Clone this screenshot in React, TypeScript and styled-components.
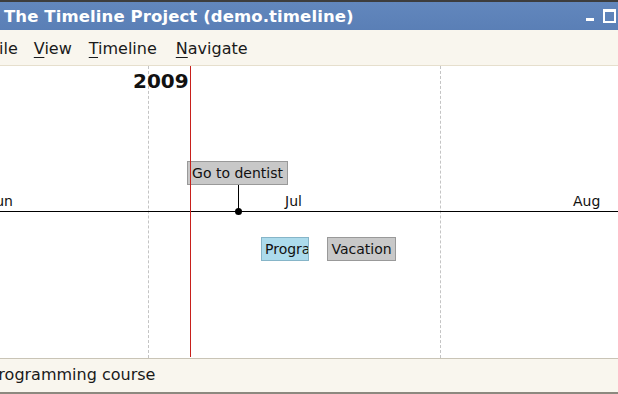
import React from "react";
import styled, { createGlobalStyle } from "styled-components";

const Global = createGlobalStyle`
  html, body { margin: 0; padding: 0; background: #ffffff; overflow: hidden; }
  body { font-family: "DejaVu Sans", Verdana, sans-serif; }
`;

const Window = styled.div`
  width: 618px;
  height: 394px;
  display: flex;
  flex-direction: column;
  overflow: hidden;
  background: #ffffff;
`;

const TitleBar = styled.div`
  height: 28px;
  border-top: 2px solid #3d3d3d;
  background: linear-gradient(#6287bd, #5a7fb6);
  display: flex;
  align-items: center;
  justify-content: space-between;
  padding: 0 2px 0 4px;
  flex-shrink: 0;
`;

const Title = styled.div`
  color: #ffffff;
  font-weight: bold;
  font-size: 16.5px;
  letter-spacing: 0.1px;
  white-space: nowrap;
`;

const WinButtons = styled.div`
  display: flex;
  align-items: center;
  gap: 9px;
`;

const MinBtn = styled.div`
  width: 8px;
  height: 3px;
  background: #ffffff;
  margin-top: 6px;
`;

const MaxBtn = styled.div`
  width: 9px;
  height: 9px;
  border: 2px solid #ffffff;
  border-top-width: 3px;
`;

const MenuBar = styled.div`
  height: 36px;
  background: #f9f6ee;
  border-bottom: 1px solid #e6dfcd;
  display: flex;
  align-items: center;
  gap: 17px;
  padding-top: 1px;
  box-sizing: border-box;
  flex-shrink: 0;
`;

const MenuItem = styled.div<{ $shift?: number }>`
  font-size: 16px;
  color: #1a1a1a;
  white-space: nowrap;
  margin-left: ${(p) => p.$shift ?? 0}px;
  u { text-underline-offset: 3px; }
`;

const Canvas = styled.div`
  position: relative;
  flex: 1;
  background: #ffffff;
  overflow: hidden;
`;

const DottedLine = styled.div<{ $x: number }>`
  position: absolute;
  top: 0;
  bottom: 0;
  left: ${(p) => p.$x}px;
  width: 0;
  border-left: 1px dashed #c4c4c4;
`;

const NowLine = styled.div<{ $x: number }>`
  position: absolute;
  top: 0;
  bottom: 1px;
  left: ${(p) => p.$x}px;
  width: 1px;
  background: #c8201c;
`;

const Year = styled.div`
  position: absolute;
  left: 133px;
  top: 3px;
  font-size: 20px;
  font-weight: bold;
  color: #111;
`;

const Axis = styled.div`
  position: absolute;
  left: 0;
  right: 0;
  top: 145px;
  height: 1px;
  background: #000;
`;

const AxisLabel = styled.div<{ $x: number }>`
  position: absolute;
  left: ${(p) => p.$x}px;
  top: 127px;
  font-size: 14px;
  color: #111;
`;

const EventBox = styled.div<{ $x: number; $y: number; $w: number; $blue?: boolean }>`
  position: absolute;
  left: ${(p) => p.$x}px;
  top: ${(p) => p.$y}px;
  width: ${(p) => p.$w}px;
  height: 24px;
  box-sizing: border-box;
  background: ${(p) => (p.$blue ? "#acdbec" : "#c8c8c8")};
  border: 1px solid ${(p) => (p.$blue ? "#86b5c8" : "#999999")};
  font-size: 14px;
  color: #111;
  line-height: 22px;
  padding: 0 ${(p) => (p.$blue ? 3 : 1)}px;
  text-align: ${(p) => (p.$blue ? "left" : "center")};
  white-space: nowrap;
  overflow: hidden;
`;

const Stem = styled.div<{ $x: number }>`
  position: absolute;
  left: ${(p) => p.$x}px;
  top: 119px;
  width: 1px;
  height: 26px;
  background: #000;
`;

const Dot = styled.div<{ $x: number }>`
  position: absolute;
  left: ${(p) => p.$x - 3}px;
  top: 142px;
  width: 7px;
  height: 7px;
  border-radius: 50%;
  background: #000;
`;

const StatusBar = styled.div`
  height: 33px;
  background: #f9f6ee;
  border-top: 1px solid #c9c4b6;
  border-bottom: 2px solid #8c897f;
  display: flex;
  align-items: center;
  flex-shrink: 0;
`;

const StatusText = styled.div`
  font-size: 16px;
  color: #1a1a1a;
  margin-left: -11px;
  margin-top: -2px;
  white-space: nowrap;
`;

export default function App() {
  return (
    <Window>
      <Global />
      <TitleBar>
        <Title>The Timeline Project (demo.timeline)</Title>
        <WinButtons>
          <MinBtn />
          <MaxBtn />
        </WinButtons>
      </TitleBar>
      <MenuBar>
        <MenuItem $shift={-9}>
          <u>F</u>ile
        </MenuItem>
        <MenuItem $shift={-1}>
          <u>V</u>iew
        </MenuItem>
        <MenuItem>
          <u>T</u>imeline
        </MenuItem>
        <MenuItem $shift={2}>
          <u>N</u>avigate
        </MenuItem>
      </MenuBar>
      <Canvas>
        <DottedLine $x={148} />
        <DottedLine $x={440} />
        <Year>2009</Year>
        <Axis />
        <AxisLabel $x={-9}>Jun</AxisLabel>
        <AxisLabel $x={285}>Jul</AxisLabel>
        <AxisLabel $x={573}>Aug</AxisLabel>
        <EventBox $x={187} $y={95} $w={101}>Go to dentist</EventBox>
        <Stem $x={238} />
        <Dot $x={238} />
        <EventBox $x={261} $y={171} $w={48} $blue>
          Programming course
        </EventBox>
        <EventBox $x={327} $y={171} $w={69}>Vacation</EventBox>
        <NowLine $x={190} />
      </Canvas>
      <StatusBar>
        <StatusText>Programming course</StatusText>
      </StatusBar>
    </Window>
  );
}
